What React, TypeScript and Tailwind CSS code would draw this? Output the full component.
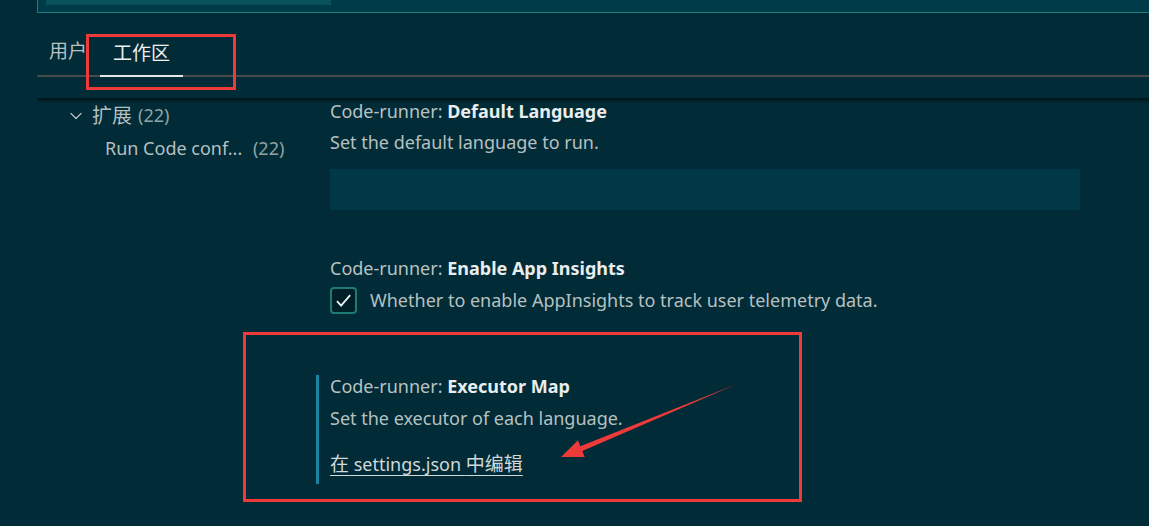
import { ChevronDown } from "lucide-react";

const font = "font-['Noto_Sans','Noto_Sans_CJK_SC',sans-serif]";

function SettingTitle({ name }: { name: string }) {
  return (
    <div className="h-[26px] leading-[26px] text-[18px] text-[#b9c2c2]">
      Code-runner: <span className="font-bold text-[#e9eded]">{name}</span>
    </div>
  );
}

export default function App() {
  return (
    <div className={`relative w-[1149px] h-[526px] overflow-hidden bg-[#002b37] ${font}`}>
      {/* search box (scrolled off the top) */}
      <div className="ml-[37px] h-[13px] bg-[#003b49] border-l border-b border-[#1b8080] flex">
        <div className="ml-[8px] w-[285px] h-[5px] bg-[#0a525a]" />
      </div>

      {/* tabs */}
      <div className="ml-[37px] h-[64px] flex items-end border-b-2 border-[#474b4b]">
        <div className="pl-[12px] pr-[13px] h-[36px] text-[19px] text-[#b9c2c2] leading-[24px]">用户</div>
        <div className="px-[13px] h-[36px] -mb-[2px] border-b-2 border-[#e6e6e6] text-[19px] text-[#f0f0f0] leading-[24px]">
          工作区
        </div>
      </div>

      {/* sticky header shadow */}
      <div className="ml-[37px] mt-[21px] h-[5px] bg-gradient-to-b from-[#00141a] to-[#002b37]" />

      <div className="flex ml-[37px]">
        {/* table of contents */}
        <div className="w-[293px] shrink-0 text-[18px] leading-[33px]">
          <div className="flex items-center h-[33px] mt-[-4px] pl-[29px] text-[#b6bfbf]">
            <ChevronDown className="w-[20px] h-[20px] mr-[6px] text-[#b6bfbf]" strokeWidth={1.5} />
            <span className="text-[20px]">扩展</span>
            <span className="ml-[6px] text-[#93a3a3]">(22)</span>
          </div>
          <div className="pl-[68px] text-[#b6bfbf] whitespace-nowrap">
            Run Code conf... <span className="ml-[6px] text-[#93a3a3]">(22)</span>
          </div>
        </div>

        {/* settings list */}
        <div className="flex-1 flex flex-col mt-[-5px]">
          <SettingTitle name="Default Language" />
          <div className="mt-[5px] h-[26px] leading-[26px] text-[18px] text-[#b7c0c0]">Set the default language to run.</div>
          <div className="mt-[14px] w-[750px] h-[41px] bg-[#003847]" />

          <div className="mt-[45px]">
            <SettingTitle name="Enable App Insights" />
          </div>
          <div className="mt-[6px] flex items-center h-[26px]">
            <div className="w-[27px] h-[27px] rounded-[4px] border-2 border-[#1f7b72] bg-[#002029] flex items-center justify-center">
              <svg viewBox="0 0 16 16" className="w-[19px] h-[19px]" fill="none" stroke="#f2f2f2" strokeWidth="1.5">
                <path d="M2.5 8.5 L6 12.3 L13.6 3.5" />
              </svg>
            </div>
            <span className="ml-[13px] text-[18px] text-[#b7c0c0]">Whether to enable AppInsights to track user telemetry data.</span>
          </div>

          <div className="mt-[62px] -ml-[14px] border-l-[3px] border-[#1a84a4] pl-[11px] h-[109px] flex flex-col">
            <div className="-mt-[2px]">
              <SettingTitle name="Executor Map" />
            </div>
            <div className="mt-[6px] h-[26px] leading-[26px] text-[18px] text-[#b7c0c0]">Set the executor of each language.</div>
            <div className="mt-[20px] h-[26px] leading-[26px] text-[18px] text-[#d2d8d8] underline underline-offset-[4px]">
              <span className="text-[19px]">在</span> settings.json <span className="text-[19px]">中编辑</span>
            </div>
          </div>
        </div>
      </div>

      {/* annotations */}
      <div className="absolute left-[86px] top-[34px] w-[150px] h-[56px] border-[3px] border-[#ef3a3a]" />
      <div className="absolute left-[243px] top-[332px] w-[559px] h-[170px] border-[3px] border-[#ef3a3a]" />
      <svg className="absolute left-0 top-0" width="1149" height="526" viewBox="0 0 1149 526">
        <polygon
          points="561,457 578,440.3 580.3,446.3 737,384 582.3,450.9 584.7,456.9"
          fill="#ef3a3a"
        />
      </svg>
    </div>
  );
}
